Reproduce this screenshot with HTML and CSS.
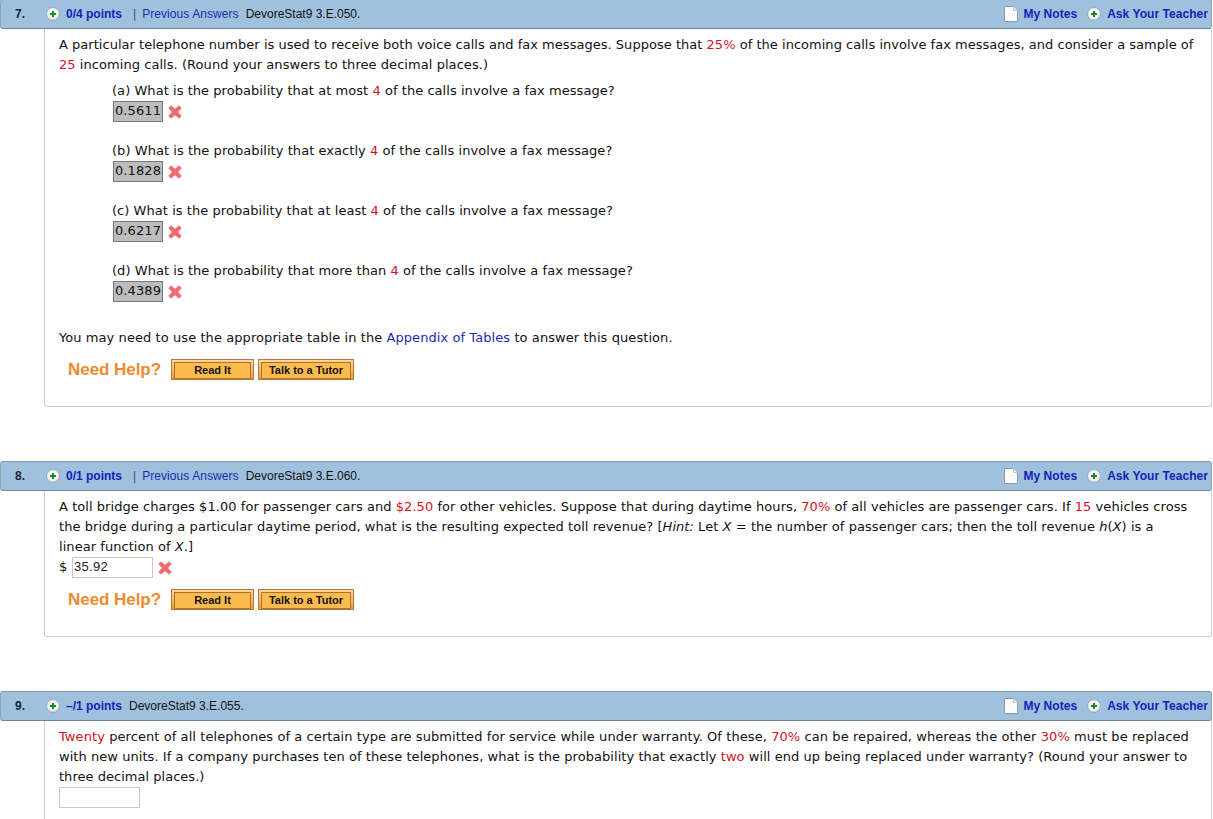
FILE: index.html
```html
<!DOCTYPE html>
<html lang="en">
<head>
<meta charset="utf-8">
<title>Homework</title>
<link rel="stylesheet" href="styles.css">
</head>
<body>
<svg class="defs" width="0" height="0" aria-hidden="true">
  <defs>
    <radialGradient id="pearl" cx="45%" cy="35%" r="70%">
      <stop offset="0" stop-color="#ffffff"/>
      <stop offset="0.7" stop-color="#f1f1ec"/>
      <stop offset="1" stop-color="#c9cdcc"/>
    </radialGradient>
    <symbol id="plus" viewBox="0 0 14 14">
      <circle cx="7" cy="7" r="6.4" fill="url(#pearl)" stroke="#8d9ba5" stroke-width="0.7"/>
      <path d="M7 4v6M4 7h6" stroke="#138a28" stroke-width="2"/>
    </symbol>
    <symbol id="note" viewBox="0 0 14 16">
      <path d="M.5.5h9l4 4v11H.5z" fill="#fbfbfb" stroke="#8c9aa6"/>
      <path d="M9.5.5v4h4" fill="#ececec" stroke="#c4c9cd"/>
    </symbol>
    <symbol id="cross" viewBox="0 0 14 14">
      <path d="M3 .6 7 3.9 11 .6 13.5 3 10 7l3.5 4L11 13.4 7 10.1 3 13.4.5 11 4 7 .5 3z" fill="#ee6a72" stroke="#f0959b" stroke-width=".5" stroke-linejoin="round"/>
    </symbol>
  </defs>
</svg>

<section class="question q7">
  <header class="qhead">
    <span class="qnum">7.</span>
    <svg class="ico-plus"><use href="#plus"/></svg>
    <a class="points">0/4 points</a>
    <span class="sep">|</span>
    <a class="prev">Previous Answers</a>
    <span class="ref">DevoreStat9 3.E.050.</span>
    <span class="tools">
      <svg class="ico-note"><use href="#note"/></svg><a class="tool">My Notes</a>
      <svg class="ico-plus ico-ask"><use href="#plus"/></svg><a class="tool">Ask Your Teacher</a>
    </span>
  </header>
  <div class="qbody">
    <p class="line"><span class="ls-xs">A particular telephone number is used to receive both voice calls and fax messages. Suppose that <b class="r">25%</b> of the incoming calls involve fax messages, and consider a sample of</span><br><span class="ls-m"><b class="r">25</b> incoming calls. (Round your answers to three decimal places.)</span></p>
    <div class="part">
      <p class="line ls-s">(a) What is the probability that at most <b class="r">4</b> of the calls involve a fax message?</p>
      <div class="ansrow"><span class="graded">0.5611</span><svg class="ico-x"><use href="#cross"/></svg></div>
    </div>
    <div class="part">
      <p class="line ls-s">(b) What is the probability that exactly <b class="r">4</b> of the calls involve a fax message?</p>
      <div class="ansrow"><span class="graded">0.1828</span><svg class="ico-x"><use href="#cross"/></svg></div>
    </div>
    <div class="part">
      <p class="line ls-s">(c) What is the probability that at least <b class="r">4</b> of the calls involve a fax message?</p>
      <div class="ansrow"><span class="graded">0.6217</span><svg class="ico-x"><use href="#cross"/></svg></div>
    </div>
    <div class="part">
      <p class="line ls-s">(d) What is the probability that more than <b class="r">4</b> of the calls involve a fax message?</p>
      <div class="ansrow"><span class="graded">0.4389</span><svg class="ico-x"><use href="#cross"/></svg></div>
    </div>
    <p class="line note ls-l">You may need to use the appropriate table in the <a class="link">Appendix of Tables</a> to answer this question.</p>
    <div class="help">
      <span class="help-label">Need Help?</span>
      <span class="btn btn-read"><span class="btn-in">Read It</span></span>
      <span class="btn btn-tutor"><span class="btn-in">Talk to a Tutor</span></span>
    </div>
  </div>
</section>

<section class="question q8">
  <header class="qhead">
    <span class="qnum">8.</span>
    <svg class="ico-plus"><use href="#plus"/></svg>
    <a class="points">0/1 points</a>
    <span class="sep">|</span>
    <a class="prev">Previous Answers</a>
    <span class="ref">DevoreStat9 3.E.060.</span>
    <span class="tools">
      <svg class="ico-note"><use href="#note"/></svg><a class="tool">My Notes</a>
      <svg class="ico-plus ico-ask"><use href="#plus"/></svg><a class="tool">Ask Your Teacher</a>
    </span>
  </header>
  <div class="qbody">
    <p class="line ls-m">A toll bridge charges $1.00 for passenger cars and <b class="r">$2.50</b> for other vehicles. Suppose that during daytime hours, <b class="r">70%</b> of all vehicles are passenger cars. If <b class="r">15</b> vehicles cross<br>the bridge during a particular daytime period, what is the resulting expected toll revenue? [<i>Hint:</i> Let <i>X</i> = the number of passenger cars; then the toll revenue <i>h</i>(<i>X</i>) is a<br>linear function of <i>X</i>.]</p>
    <div class="dollar-row"><span class="dollar">$</span><span class="field">35.92</span><svg class="ico-x ico-x-tight"><use href="#cross"/></svg></div>
    <div class="help help-q8">
      <span class="help-label">Need Help?</span>
      <span class="btn btn-read"><span class="btn-in">Read It</span></span>
      <span class="btn btn-tutor"><span class="btn-in">Talk to a Tutor</span></span>
    </div>
  </div>
</section>

<section class="question q9">
  <header class="qhead">
    <span class="qnum">9.</span>
    <svg class="ico-plus"><use href="#plus"/></svg>
    <a class="points">–/1 points</a>
    <span class="ref">DevoreStat9 3.E.055.</span>
    <span class="tools">
      <svg class="ico-note"><use href="#note"/></svg><a class="tool">My Notes</a>
      <svg class="ico-plus ico-ask"><use href="#plus"/></svg><a class="tool">Ask Your Teacher</a>
    </span>
  </header>
  <div class="qbody">
    <p class="line"><span class="ls-xl"><b class="r">Twenty</b> percent of all telephones of a certain type are submitted for service while under warranty. Of these, <b class="r">70%</b> can be repaired, whereas the other <b class="r">30%</b> must be replaced</span><br><span class="ls-m">with new units. If a company purchases ten of these telephones, what is the probability that exactly <b class="r">two</b> will end up being replaced under warranty? (Round your answer to</span><br><span class="ls-xs">three decimal places.)</span></p>
    <div class="field"></div>
  </div>
</section>
</body>
</html>
```

FILE: styles.css
```css
html, body {
  margin: 0;
  padding: 0;
  height: 819px;
  overflow: hidden;
  background: #fff;
}
body {
  font-family: "DejaVu Sans", Verdana, sans-serif;
  font-size: 13px;
  line-height: 20px;
  color: #111;
}
.defs { position: absolute; }

.question { margin: 0 1px 54px 0; }
.q7 { margin-top: -1px; }

.qhead {
  display: flex;
  align-items: center;
  height: 28px;
  padding: 0 3px 0 0;
  background: #a0c1dd;
  border: 1px solid #8aa2b6;
  border-top-color: #7f98ac;
  border-bottom: 1px solid #6d8598;
  border-radius: 3px;
  font-family: "Liberation Sans", Arial, sans-serif;
  font-size: 12px;
  line-height: 14px;
  color: #111;
}
.qnum {
  width: 45px;
  padding-left: 14px;
  box-sizing: border-box;
  font-weight: bold;
  color: #1a2530;
}
.ico-plus { width: 14px; height: 14px; flex: none; }
.points {
  margin-left: 6px;
  font-weight: bold;
  color: #1123b8;
}
.sep { margin-left: 11px; color: #3e4e5e; }
.prev { margin-left: 6px; color: #1a2cb0; letter-spacing: 0.07px; }
.ref { margin-left: 7px; color: #111; }

.tools {
  margin-left: auto;
  display: flex;
  align-items: center;
}
.ico-note { width: 14px; height: 16px; flex: none; margin-right: 5px; }
.ico-ask { margin-left: 10px; margin-right: 6px; }
.tool { font-weight: bold; color: #1123b8; letter-spacing: 0.05px; }

.qbody {
  margin-left: 44px;
  padding: 6px 0 0 14px;
  border: 1px solid #cfcfcf;
  border-top: 0;
  border-radius: 0 0 3px 3px;
}
.q7 .qbody { height: 371px; }
.q8 .qbody { height: 139px; }
.q9 .qbody { height: 200px; }

.line { margin: 0; white-space: nowrap; }
.r { font-weight: normal; color: #d1131f; }

.ls-xs { letter-spacing: 0.025px; }
.ls-s { letter-spacing: 0.05px; }
.ls-m { letter-spacing: 0.055px; }
.ls-l { letter-spacing: 0.075px; }
.ls-xl { letter-spacing: 0.08px; }

.part { margin: 6px 0 0 53px; }
.part + .part { margin-top: 20px; }
.ansrow { display: flex; align-items: center; height: 20px; }
.graded {
  display: block;
  width: 50px;
  height: 21px;
  margin-left: 1px;
  box-sizing: border-box;
  border: 1px solid #777;
  background: #bdbdbd;
  font-size: 13px;
  line-height: 18px;
  padding-left: 1px;
  letter-spacing: 0.1px;
  color: #111;
}
.ico-x { width: 14px; height: 14px; flex: none; margin: 2px 0 0 5px; }

.note { margin-top: 27px; }
.link { color: #1a2cb0; }

.help {
  display: flex;
  align-items: center;
  height: 21px;
  margin: 11px 0 0 9px;
}
.help-q8 { margin-top: 12px; }
.help-label {
  width: 103px;
  font-family: "Liberation Sans", Arial, sans-serif;
  font-size: 17px;
  line-height: 21px;
  font-weight: bold;
  letter-spacing: -0.05px;
  color: #f08a2c;
}
.btn {
  display: block;
  box-sizing: border-box;
  height: 21px;
  padding: 3px;
  border: 1px solid #b5793a;
  background: linear-gradient(#fbd6a0, #f59a33);
}
.btn-in {
  display: block;
  border: 1px solid #a9742f;
  margin: -1px;
  height: 15px;
  background: #fdbb4e;
  font-family: "Liberation Sans", Arial, sans-serif;
  font-size: 11px;
  line-height: 14px;
  font-weight: bold;
  text-align: center;
  color: #111;
}
.btn-read { width: 83px; }
.btn-tutor { width: 96px; margin-left: 4px; }

.dollar-row { display: flex; align-items: center; height: 20px; }
.dollar { width: 13px; }
.field {
  display: block;
  box-sizing: border-box;
  width: 81px;
  height: 21px;
  border: 1px solid #c8c8c8;
  padding-left: 1px;
  font-family: "Liberation Sans", Arial, sans-serif;
  font-size: 13px;
  line-height: 18px;
  letter-spacing: 0.3px;
  color: #222;
  background: #fff;
}
```
